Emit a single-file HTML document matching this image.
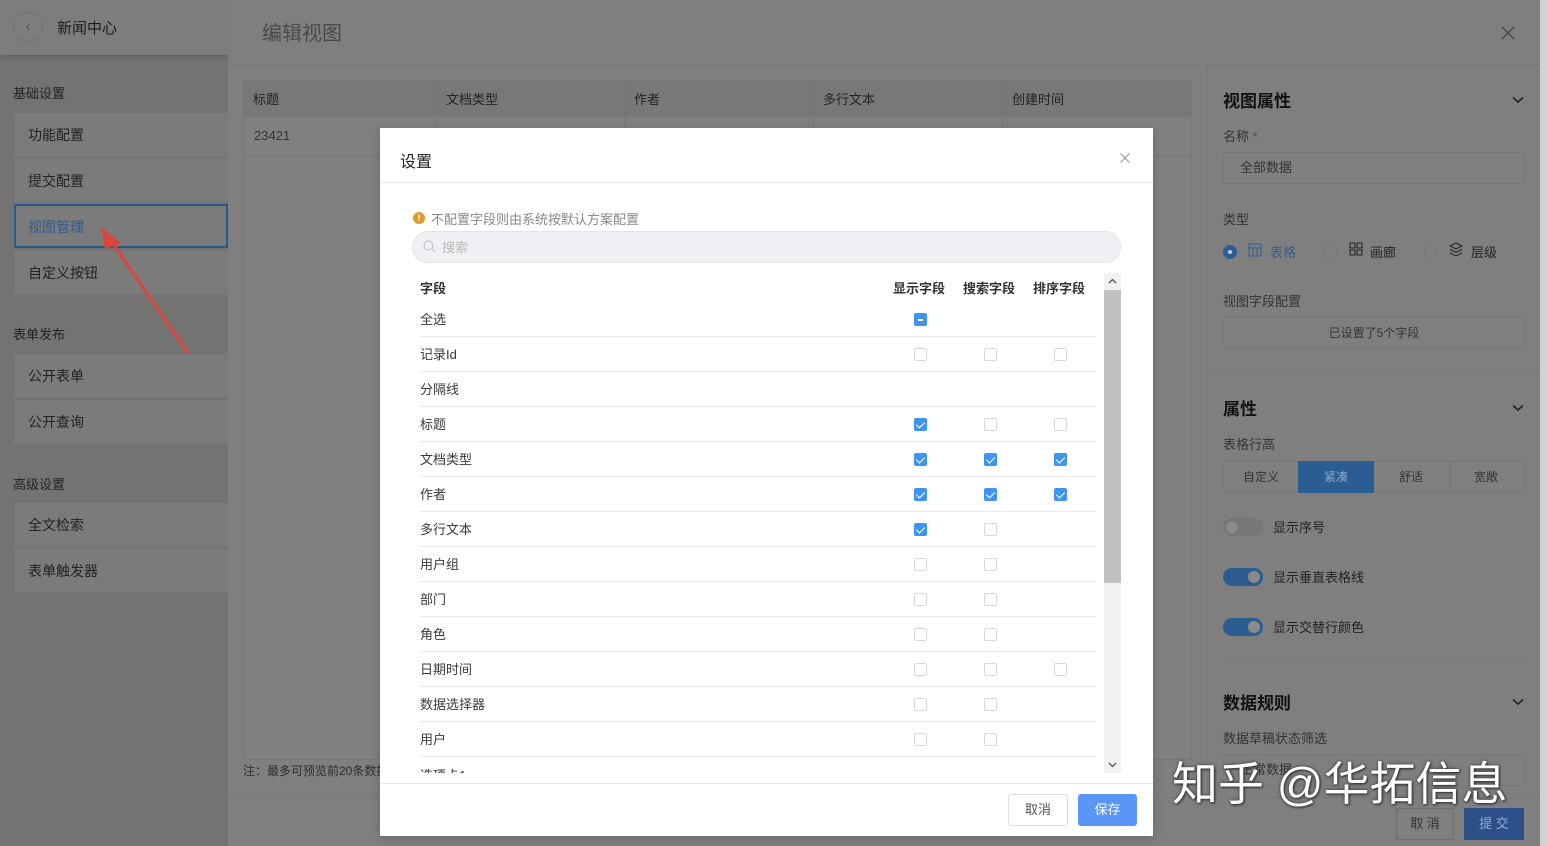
<!DOCTYPE html>
<html><head><meta charset="utf-8">
<style>
*{margin:0;padding:0;box-sizing:border-box}
body{width:1548px;height:846px;overflow:hidden;position:relative;background:#737373;font-family:"Liberation Sans","Noto Sans CJK SC",sans-serif;font-size:13px;color:#1e1e1e}
.a{position:absolute}
.card{position:absolute;left:14px;width:214px;height:44px;background:#7b7b7b;border-bottom:1px solid #747474;padding-left:14px;line-height:44px;font-size:14px;color:#222}
.sec{position:absolute;left:13px;font-size:13px;color:#222}
.cb{position:absolute;width:13px;height:13px;border:1px solid #d9d9d9;border-radius:2px;background:#fff}
.cb.on{background:#3d95f0;border-color:#3d95f0}
.cb.on:after{content:"";position:absolute;left:3px;top:1px;width:4px;height:7px;border:solid #fff;border-width:0 1.5px 1.5px 0;transform:rotate(45deg)}
.cb.ind{background:#3d95f0;border-color:#3d95f0}
.cb.ind:after{content:"";position:absolute;left:3px;top:5px;width:5px;height:1.5px;background:#fff}
.row{position:absolute;left:420px;width:676px;height:35px;border-bottom:1px solid #ebebeb;line-height:36px;font-size:13px;color:#333}
.lbl{font-size:13px;color:#3a3a3a}
</style></head><body>
<!-- left sidebar -->
<div class="a" style="left:0;top:0;width:228px;height:55px;background:#7d7d7d;box-shadow:0 2px 4px rgba(0,0,0,.15)"></div>
<div class="a" style="left:13px;top:12px;width:30px;height:30px;border:1px solid #727272;border-radius:50%;color:#555;text-align:center;line-height:27px;font-size:15px">‹</div>
<div class="a" style="left:57px;top:17px;font-size:15px;color:#1a1a1a">新闻中心</div>
<div class="sec" style="top:83px">基础设置</div>
<div class="card" style="top:113px">功能配置</div>
<div class="card" style="top:159px">提交配置</div>
<div class="card" style="top:204px;border:2px solid #2a5a8a;color:#2e5c8e;padding-left:12px;line-height:42px">视图管理</div>
<div class="card" style="top:251px">自定义按钮</div>
<div class="sec" style="top:324px">表单发布</div>
<div class="card" style="top:354px">公开表单</div>
<div class="card" style="top:400px">公开查询</div>
<div class="sec" style="top:474px">高级设置</div>
<div class="card" style="top:503px">全文检索</div>
<div class="card" style="top:549px">表单触发器</div>
<svg class="a" style="left:95px;top:225px" width="100" height="135"><line x1="93" y1="128" x2="12" y2="10" stroke="#d9463a" stroke-width="3"/><polygon points="6,2 26,18 10,24" fill="#d9463a"/></svg>
<!-- drawer -->
<div class="a" style="left:228px;top:0;width:1312px;height:846px;background:#7f7f7f"></div>
<div class="a" style="left:1540px;top:0;width:8px;height:846px;background:#d2d2d2"></div>
<div class="a" style="left:228px;top:64px;width:1312px;height:1px;background:#787878"></div>
<div class="a" style="left:262px;top:17px;font-size:20px;color:#4a4a4a">编辑视图</div>
<svg class="a" style="left:1501px;top:26px" width="14" height="14"><path d="M1 1L13 13M13 1L1 13" stroke="#4a4a4a" stroke-width="1.5"/></svg>
<div class="a" style="left:243px;top:80px;width:949px;height:680px;border:1px solid #777;background:#808080"></div>
<div class="a" style="left:243px;top:80px;width:949px;height:37px;background:#787878"></div>
<div class="a" style="left:243px;top:155px;width:949px;height:1px;background:#777"></div>
<div class="a" style="left:253px;top:89px;color:#222">标题</div>
<div class="a" style="left:446px;top:89px;color:#222">文档类型</div>
<div class="a" style="left:634px;top:89px;color:#222">作者</div>
<div class="a" style="left:823px;top:89px;color:#222">多行文本</div>
<div class="a" style="left:1012px;top:89px;color:#222">创建时间</div>
<div class="a" style="left:435px;top:80px;width:1px;height:76px;background:#767676"></div>
<div class="a" style="left:624px;top:80px;width:1px;height:76px;background:#767676"></div>
<div class="a" style="left:813px;top:80px;width:1px;height:76px;background:#767676"></div>
<div class="a" style="left:1002px;top:80px;width:1px;height:76px;background:#767676"></div>
<div class="a" style="left:254px;top:128px;color:#333">23421</div>
<div class="a" style="left:243px;top:762px;font-size:12px;color:#2e2e2e">注：最多可预览前20条数据</div>
<div class="a" style="left:228px;top:797px;width:1312px;height:1px;background:#787878"></div>
<!-- right panel -->
<div class="a" style="left:1207px;top:65px;width:1px;height:732px;background:#787878"></div>
<div class="a" style="left:1223px;top:87px;font-size:17px;font-weight:bold;color:#111">视图属性</div>
<svg class="a" style="left:1512px;top:96px" width="12" height="8"><path d="M1 1.5L6 6L11 1.5" fill="none" stroke="#222" stroke-width="1.6"/></svg>
<div class="a" style="left:1223px;top:126px;color:#333">名称 <span style="color:#8a3a3a">*</span></div>
<div class="a" style="left:1223px;top:152px;width:302px;height:32px;border:1px solid #777;border-radius:3px;padding-left:16px;line-height:30px;color:#333">全部数据</div>
<div class="a" style="left:1223px;top:209px;color:#333">类型</div>
<div class="a" style="left:1223px;top:245px;width:14px;height:14px;border-radius:50%;background:#2d5e93"><div class="a" style="left:5px;top:5px;width:4px;height:4px;background:#ccc;border-radius:50%"></div></div>
<svg class="a" style="left:1248px;top:243px" width="14" height="14"><rect x="1" y="1" width="12" height="12" fill="none" stroke="#2d5e93"/><line x1="1" y1="5" x2="13" y2="5" stroke="#2d5e93"/><line x1="5" y1="5" x2="5" y2="13" stroke="#2d5e93"/><line x1="9" y1="5" x2="9" y2="13" stroke="#2d5e93"/></svg>
<div class="a" style="left:1270px;top:242px;color:#2d5e93">表格</div>
<div class="a" style="left:1324px;top:245px;width:14px;height:14px;border-radius:50%;border:1px solid #777"></div>
<svg class="a" style="left:1349px;top:242px" width="14" height="14"><rect x="1" y="1" width="5" height="5" fill="none" stroke="#222"/><rect x="8" y="1" width="5" height="5" fill="none" stroke="#222"/><rect x="1" y="8" width="5" height="5" fill="none" stroke="#222"/><rect x="8" y="8" width="5" height="5" fill="none" stroke="#222"/></svg>
<div class="a" style="left:1370px;top:242px;color:#222">画廊</div>
<div class="a" style="left:1424px;top:245px;width:14px;height:14px;border-radius:50%;border:1px solid #777"></div>
<svg class="a" style="left:1448px;top:241px" width="16" height="16"><path d="M8 2 L14 5 L8 8 L2 5 Z M2 8.5 L8 11.5 L14 8.5 M2 12 L8 15 L14 12" fill="none" stroke="#222"/></svg>
<div class="a" style="left:1471px;top:242px;color:#222">层级</div>
<div class="a" style="left:1223px;top:291px;color:#333">视图字段配置</div>
<div class="a" style="left:1223px;top:317px;width:302px;height:32px;border:1px solid #777;border-radius:3px;text-align:center;line-height:30px;font-size:12px;color:#333">已设置了5个字段</div>
<div class="a" style="left:1207px;top:371px;width:333px;height:1px;background:#787878"></div>
<div class="a" style="left:1223px;top:395px;font-size:17px;font-weight:bold;color:#111">属性</div>
<svg class="a" style="left:1512px;top:404px" width="12" height="8"><path d="M1 1.5L6 6L11 1.5" fill="none" stroke="#222" stroke-width="1.6"/></svg>
<div class="a" style="left:1223px;top:434px;color:#333">表格行高</div>
<div class="a" style="left:1223px;top:461px;width:302px;height:32px;border:1px solid #777;border-radius:3px"></div>
<div class="a" style="left:1298px;top:461px;width:76px;height:32px;background:#2b5d92"></div>
<div class="a" style="left:1449px;top:462px;width:1px;height:30px;background:#777"></div>
<div class="a" style="left:1243px;top:468px;font-size:12px;color:#333">自定义</div>
<div class="a" style="left:1324px;top:468px;font-size:12px;color:#8fa9c6">紧凑</div>
<div class="a" style="left:1399px;top:468px;font-size:12px;color:#333">舒适</div>
<div class="a" style="left:1474px;top:468px;font-size:12px;color:#333">宽敞</div>
<div class="a" style="left:1223px;top:518px;width:40px;height:18px;border-radius:9px;background:#767676"></div>
<div class="a" style="left:1226px;top:521px;width:12px;height:12px;border-radius:50%;background:#8a8a8a"></div>
<div class="a" style="left:1273px;top:517px;color:#222">显示序号</div>
<div class="a" style="left:1223px;top:568px;width:40px;height:18px;border-radius:9px;background:#2b5d92"></div>
<div class="a" style="left:1248px;top:571px;width:12px;height:12px;border-radius:50%;background:#8a8a8a"></div>
<div class="a" style="left:1273px;top:567px;color:#222">显示垂直表格线</div>
<div class="a" style="left:1223px;top:618px;width:40px;height:18px;border-radius:9px;background:#2b5d92"></div>
<div class="a" style="left:1248px;top:621px;width:12px;height:12px;border-radius:50%;background:#8a8a8a"></div>
<div class="a" style="left:1273px;top:617px;color:#222">显示交替行颜色</div>
<div class="a" style="left:1223px;top:661px;width:302px;height:1px;background:#787878"></div>
<div class="a" style="left:1223px;top:689px;font-size:17px;font-weight:bold;color:#111">数据规则</div>
<svg class="a" style="left:1512px;top:698px" width="12" height="8"><path d="M1 1.5L6 6L11 1.5" fill="none" stroke="#222" stroke-width="1.6"/></svg>
<div class="a" style="left:1223px;top:728px;color:#333">数据草稿状态筛选</div>
<div class="a" style="left:1223px;top:754px;width:302px;height:32px;border:1px solid #777;border-radius:3px;padding-left:16px;line-height:30px;color:#333">正常数据</div>
<div class="a" style="left:1396px;top:808px;width:58px;height:32px;border:1px solid #6e6e6e;text-align:center;line-height:30px;color:#333">取 消</div>
<div class="a" style="left:1464px;top:808px;width:60px;height:32px;background:#2b4f86;text-align:center;line-height:32px;color:#9aaccc">提 交</div>
<div class="a" style="left:1172px;top:748px;font-size:46px;color:#fff;text-shadow:0 0 3px #333,1px 1px 2px #333;white-space:nowrap">知乎 @华拓信息</div>
<!-- modal -->
<div class="a" style="left:380px;top:128px;width:773px;height:708px;background:#fff;box-shadow:0 2px 10px rgba(0,0,0,.2)">
<div class="a" style="left:20px;top:20px;font-size:16px;color:#222">设置</div>
<svg class="a" style="left:740px;top:25px" width="10" height="10"><path d="M0.5 0.5L9.5 9.5M9.5 0.5L0.5 9.5" stroke="#999" stroke-width="1.2"/></svg>
<div class="a" style="left:0;top:54px;width:773px;height:1px;background:#e8e8e8"></div>
<div class="a" style="left:33px;top:84px;width:12px;height:12px;border-radius:50%;background:#e39b2c;color:#fff;font-size:9px;text-align:center;line-height:12px;font-weight:bold">!</div>
<div class="a" style="left:51px;top:81px;font-size:13px;color:#888">不配置字段则由系统按默认方案配置</div>
<div class="a" style="left:32px;top:103px;width:709px;height:32px;border:1px solid #e2e4e8;border-radius:16px;background:#eff0f3"></div>
<svg class="a" style="left:43px;top:112px" width="13" height="13"><circle cx="5.5" cy="5.5" r="4.5" fill="none" stroke="#bbb"/><line x1="9" y1="9" x2="12" y2="12" stroke="#bbb"/></svg>
<div class="a" style="left:62px;top:109px;font-size:13px;color:#bbb">搜索</div>
<div class="a" style="left:40px;top:150px;font-size:13px;font-weight:bold;color:#333">字段</div>
<div class="a" style="left:513px;top:150px;font-size:13px;font-weight:bold;color:#333">显示字段</div>
<div class="a" style="left:583px;top:150px;font-size:13px;font-weight:bold;color:#333">搜索字段</div>
<div class="a" style="left:653px;top:150px;font-size:13px;font-weight:bold;color:#333">排序字段</div>
<div class="a" style="left:724px;top:145px;width:17px;height:500px;background:#f1f1f1"></div>
<div class="a" style="left:724px;top:162px;width:17px;height:293px;background:#c1c1c1"></div>
<svg class="a" style="left:728px;top:150px" width="9" height="6"><path d="M1 5L4.5 1.5L8 5" fill="none" stroke="#555" stroke-width="1.3"/></svg>
<svg class="a" style="left:728px;top:634px" width="9" height="6"><path d="M1 1L4.5 4.5L8 1" fill="none" stroke="#555" stroke-width="1.3"/></svg>
<div class="a" style="left:0;top:655px;width:773px;height:1px;background:#e8e8e8"></div>
<div class="a" style="left:628px;top:666px;width:60px;height:32px;border:1px solid #ddd;border-radius:3px;text-align:center;line-height:30px;color:#555">取消</div>
<div class="a" style="left:698px;top:666px;width:59px;height:32px;background:#5b95f5;border-radius:3px;text-align:center;line-height:32px;color:#fff">保存</div>
</div>
<div class="a" id="rows" style="left:0;top:0"></div>
<div class="a" style="left:380px;top:760px;width:720px;height:13px;overflow:hidden">
<div class="a" style="left:40px;top:5px;font-size:13px;color:#333">选项卡1</div></div>
<script>
var d=[["全选",3,0,0],["记录Id",1,1,1],["分隔线",0,0,0],["标题",2,1,1],["文档类型",2,2,2],["作者",2,2,2],["多行文本",2,1,0],["用户组",1,1,0],["部门",1,1,0],["角色",1,1,0],["日期时间",1,1,1],["数据选择器",1,1,0],["用户",1,1,0]];
var h="";d.forEach(function(r,i){var t=302+35*i;h+='<div class="row" style="top:'+t+'px"><span class="lbl">'+r[0]+'</span></div>';
[921,991,1061].forEach(function(x,j){var s=r[j+1];if(!s)return;var c=s==2?"cb on":s==3?"cb ind":"cb";h+='<div class="'+c+'" style="left:'+(x-7)+'px;top:'+(t+11)+'px"></div>';});});
document.getElementById("rows").innerHTML=h;
</script>
</body></html>
